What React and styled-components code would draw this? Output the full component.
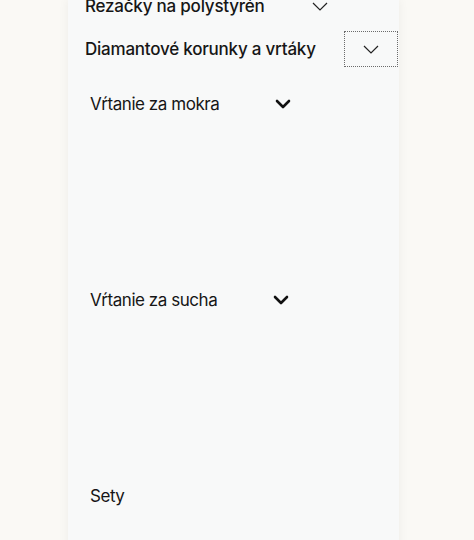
import React from "react";
import styled, { createGlobalStyle } from "styled-components";

const Global = createGlobalStyle`
  html, body { margin: 0; padding: 0; background: #faf9f5; }
  body { font-family: Inter, "Open Sans", sans-serif; color: #161616; overflow: hidden; }
`;

const Page = styled.div`
  height: 540px;
  display: flex;
  justify-content: flex-start;
  padding-left: 68px;
  overflow: hidden;
`;

const Panel = styled.nav`
  width: 331px;
  min-height: 620px;
  background: #f8f9f9;
  box-shadow: 0 0 10px rgba(0, 0, 0, 0.06);
`;

const List = styled.ul`
  list-style: none;
  margin: -12px 0 0;
  padding: 0 0 0 17px;
  display: flex;
  flex-direction: column;
  gap: 7px;
`;

const Row = styled.div`
  display: flex;
  align-items: center;
  height: 36px;
`;

const Label = styled.span`
  font-size: 17px;
  font-weight: ${(p) => (p.$strong ? 500 : 400)};
  letter-spacing: ${(p) => (p.$strong ? "-0.22px" : "-0.45px")};
  white-space: nowrap;
`;

const ToggleButton = styled.button`
  width: 54px;
  height: 36px;
  margin-left: 28px;
  padding: 0;
  border: 1px dotted ${(p) => (p.$focused ? "#6b6b6b" : "transparent")};
  background: transparent;
  display: flex;
  align-items: center;
  justify-content: center;
  color: #222;
`;

const SubList = styled.ul`
  list-style: none;
  margin: 19px 0 0;
  padding: 0 0 0 5px;
`;

const SubItem = styled.li`
  min-height: 196px;
`;

const SubToggle = styled.span`
  margin-left: 56px;
  display: flex;
  align-items: center;
`;

const ThinChevron = () => (
  <svg width="16" height="9" viewBox="0 0 16 9" fill="none">
    <path d="M1 1 L8 8 L15 1" stroke="currentColor" strokeWidth="1.2" />
  </svg>
);

const BoldChevron = () => (
  <svg width="16" height="10" viewBox="0 0 16 10" fill="none">
    <path d="M2 2 L8 8 L14 2" stroke="#111" strokeWidth="2.6" strokeLinecap="round" strokeLinejoin="round" />
  </svg>
);

export default function App() {
  return (
    <>
      <Global />
      <Page>
        <Panel>
          <List>
            <li>
              <Row>
                <Label $strong>Rezačky na polystyrén</Label>
                <ToggleButton aria-label="Rozbaliť"><ThinChevron /></ToggleButton>
              </Row>
            </li>
            <li>
              <Row>
                <Label $strong>Diamantové korunky a vrtáky</Label>
                <ToggleButton $focused aria-label="Rozbaliť"><ThinChevron /></ToggleButton>
              </Row>
              <SubList>
                <SubItem>
                  <Row>
                    <Label>Vŕtanie za mokra</Label>
                    <SubToggle><BoldChevron /></SubToggle>
                  </Row>
                </SubItem>
                <SubItem>
                  <Row>
                    <Label>Vŕtanie za sucha</Label>
                    <SubToggle><BoldChevron /></SubToggle>
                  </Row>
                </SubItem>
                <SubItem>
                  <Row>
                    <Label>Sety</Label>
                  </Row>
                </SubItem>
              </SubList>
            </li>
          </List>
        </Panel>
      </Page>
    </>
  );
}
